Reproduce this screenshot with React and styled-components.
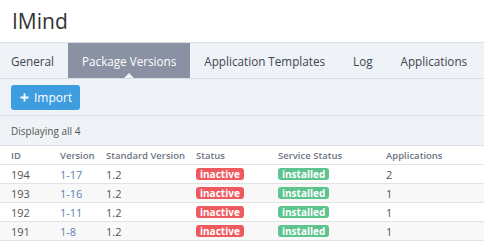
import React from "react";
import styled, {createGlobalStyle} from "styled-components";

const GlobalStyle = createGlobalStyle`
  body {
    margin: 0;
    background: #ffffff;
    font-family: "Open Sans", "Liberation Sans", sans-serif;
    color: #333;
  }
`;

const Header = styled.div`
  height: 42px;
  padding: 0 12px;
  display: flex;
  align-items: center;
`;

const Title = styled.h1`
  margin: 0;
  font-size: 21px;
  font-weight: 400;
  color: #333;
`;

const TabBar = styled.div`
  display: flex;
  height: 35px;
  background: #eff2f6;
  border-top: 1px solid #d9dee5;
  border-bottom: 1px solid #d9dee5;
`;

const Tab = styled.div`
  position: relative;
  display: flex;
  align-items: center;
  padding: 0 14px;
  white-space: nowrap;
  font-size: 11.7px;
  color: ${p => (p.active ? "#ffffff" : "#3f4652")};
  background: ${p => (p.active ? "#8991a2" : "transparent")};
  &:first-child {
    padding-left: 11px;
  }
  ${p => p.active && `
    &::after {
      content: "";
      position: absolute;
      left: 50%;
      bottom: 0;
      margin-left: -5px;
      border-left: 5px solid transparent;
      border-right: 5px solid transparent;
      border-bottom: 5px solid #eff2f6;
    }
  `}
`;

const Toolbar = styled.div`
  background: #eff2f6;
  padding: 6px 11px 5px;
  border-bottom: 1px solid #d9dee5;
`;

const Button = styled.button`
  height: 25px;
  padding: 0 8px 0 9px;
  border: 0;
  border-radius: 3px;
  background: #3d9ddf;
  color: #fff;
  font-family: inherit;
  font-size: 12px;
  display: flex;
  align-items: center;
  gap: 5px;
`;

const Info = styled.div`
  height: 29px;
  display: flex;
  align-items: center;
  padding-left: 11px;
  background: #eff2f6;
  border-bottom: 1px solid #d9dee5;
  font-size: 10px;
  color: #555;
`;

const Row = styled.div`
  display: grid;
  grid-template-columns: 49px 46px 90px 82px 108px 1fr;
  align-items: center;
  padding-left: 11px;
  height: 18px;
  background: ${p => (p.striped ? "#f8f8f8" : "#ffffff")};
  border-bottom: 1px solid #e2e2e2;
  white-space: nowrap;
  font-size: ${p => (p.head ? "9.5px" : "11px")};
  font-weight: ${p => (p.head ? 600 : 400)};
  color: ${p => (p.head ? "#6d7581" : "#555")};
`;

const Link = styled.span`
  color: #5b7fb5;
`;

const Badge = styled.span`
  justify-self: start;
  height: 12px;
  line-height: 12px;
  padding: 0 4px;
  border-radius: 3px;
  font-size: 10px;
  font-weight: 700;
  color: #fff;
  background: ${p => (p.ok ? "#5dc48d" : "#ef5a5f")};
`;

const Plus = () => (
  <svg width="9" height="9" viewBox="0 0 9 9">
    <path d="M4.5 0.5v8M0.5 4.5h8" stroke="#fff" strokeWidth="1.8"/>
  </svg>
);

const rows = [
  {id: 194, version: "1-17", apps: 2},
  {id: 193, version: "1-16", apps: 1},
  {id: 192, version: "1-11", apps: 1},
  {id: 191, version: "1-8", apps: 1},
];

const tabs = ["General", "Package Versions", "Application Templates", "Log", "Applications"];

const App = () => (
  <>
    <GlobalStyle/>
    <Header>
      <Title>IMind</Title>
    </Header>
    <TabBar>
      {tabs.map(t => (
        <Tab key={t} active={t === "Package Versions"}>{t}</Tab>
      ))}
    </TabBar>
    <Toolbar>
      <Button><Plus/>Import</Button>
    </Toolbar>
    <Info>Displaying all 4</Info>
    <Row head>
      <span>ID</span>
      <span>Version</span>
      <span>Standard Version</span>
      <span>Status</span>
      <span>Service Status</span>
      <span>Applications</span>
    </Row>
    {rows.map((r, i) => (
      <Row key={r.id} striped={i % 2 === 1}>
        <span>{r.id}</span>
        <Link>{r.version}</Link>
        <span>1.2</span>
        <Badge>inactive</Badge>
        <Badge ok>installed</Badge>
        <span>{r.apps}</span>
      </Row>
    ))}
  </>
);

export default App;
